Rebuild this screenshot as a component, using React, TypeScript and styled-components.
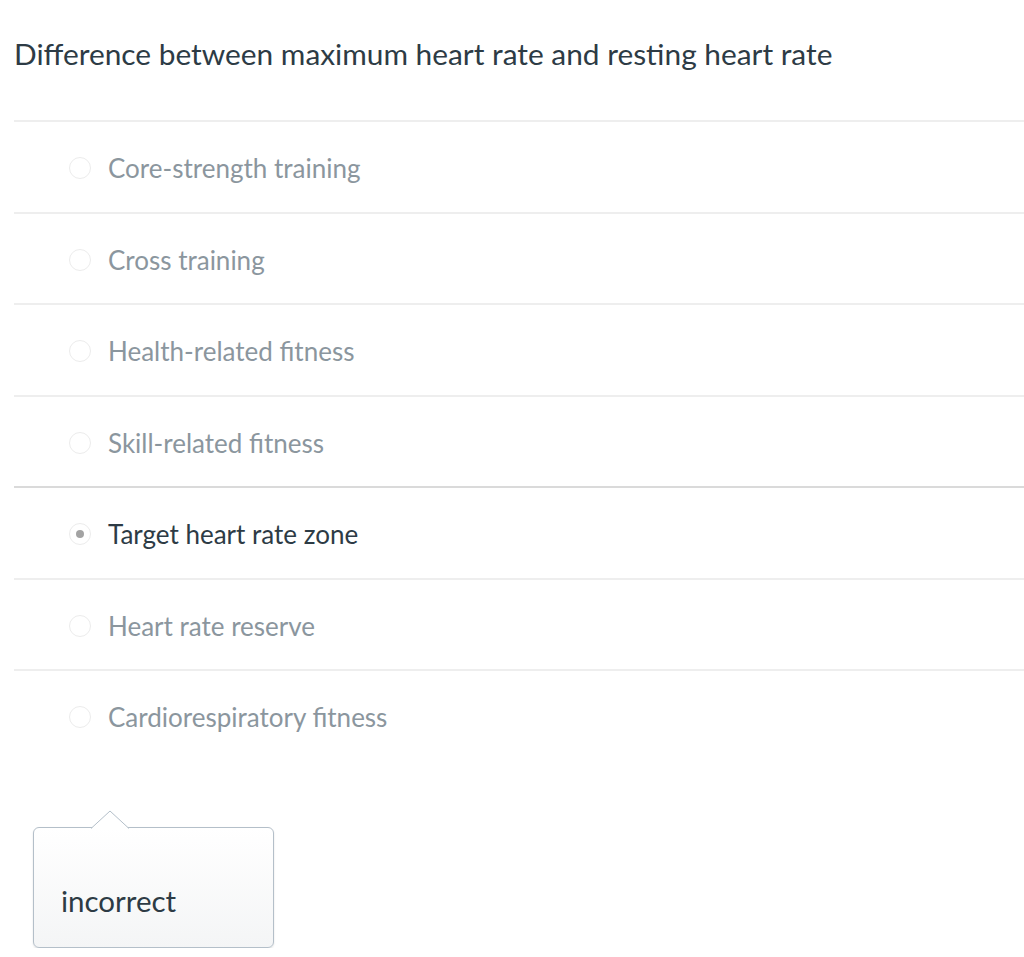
import React from 'react'
import styled, { createGlobalStyle } from 'styled-components'

const GlobalStyle = createGlobalStyle`
  html, body {
    margin: 0;
    padding: 0;
    background: #ffffff;
    font-family: Lato, 'Open Sans', sans-serif;
  }
`

const Page = styled.div`
  padding: 32px 0 0 14px;
  width: 1010px;
`

const Question = styled.h1`
  margin: 0 0 44px;
  font-size: 29.85px;
  font-weight: 400;
  line-height: 44px;
  color: #2d3b45;
`

const AnswerList = styled.ul`
  margin: 0;
  padding: 0;
  list-style: none;
`

const AnswerRow = styled.li<{ $selected?: boolean }>`
  box-sizing: border-box;
  display: flex;
  align-items: center;
  gap: 17px;
  height: 91.5px;
  padding: 3px 0 0 55px;
  border-top: 2px solid ${(p) => (p.$selected ? '#dadada' : '#eeeeee')};
`

const Radio = styled.span<{ $checked?: boolean }>`
  position: relative;
  width: 20px;
  height: 20px;
  border-radius: 50%;
  border: 1px solid #ececec;
  background: #ffffff;
  flex-shrink: 0;
  &::after {
    content: '';
    display: ${(p) => (p.$checked ? 'block' : 'none')};
    position: absolute;
    left: 6px;
    top: 6px;
    width: 8px;
    height: 8px;
    border-radius: 50%;
    background: #a3a3a3;
  }
`

const AnswerText = styled.span<{ $selected?: boolean }>`
  font-size: 26px;
  line-height: 30px;
  color: ${(p) => (p.$selected ? '#2d3b45' : '#8b969e')};
`

const Feedback = styled.div`
  position: relative;
  margin: 66px 0 0 19px;
  width: 241px;
  height: 121px;
  box-sizing: border-box;
  padding: 55px 0 0 27px;
  border: 1px solid #b4bfc9;
  border-radius: 6px;
  background: linear-gradient(#ffffff, #f4f5f6);
  box-shadow: 0 1px 2px rgba(0, 0, 0, 0.12);
  font-size: 29.5px;
  line-height: 36px;
  color: #2d3b45;
`

const Arrow = styled.svg`
  position: absolute;
  left: 57px;
  top: -18px;
`

const answers = [
  'Core-strength training',
  'Cross training',
  'Health-related fitness',
  'Skill-related fitness',
  'Target heart rate zone',
  'Heart rate reserve',
  'Cardiorespiratory fitness'
]

const selected = 'Target heart rate zone'

const App = () => (
  <Page>
    <GlobalStyle />
    <Question>Difference between maximum heart rate and resting heart rate</Question>
    <AnswerList>
      {answers.map((a) => (
        <AnswerRow key={a} $selected={a === selected}>
          <Radio $checked={a === selected} />
          <AnswerText $selected={a === selected}>{a}</AnswerText>
        </AnswerRow>
      ))}
    </AnswerList>
    <Feedback>
      <Arrow width='38' height='19' viewBox='0 0 38 19'>
        <path d='M0 18.5 L19 1 L38 18.5' fill='#ffffff' stroke='#b4bfc9' strokeWidth='1' />
      </Arrow>
      incorrect
    </Feedback>
  </Page>
)

export default App
